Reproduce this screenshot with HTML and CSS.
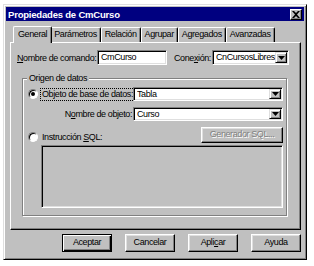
FILE: index.html
```html
<!DOCTYPE html>
<html>
<head lang="es">
    <meta charset="UTF-8">
    <title>Propiedades de CmCurso</title>
    <link rel="stylesheet" href="styles.css">
</head>
<body>
    <div class="window">
        <div class="titlebar">
            <span class="title">Propiedades de CmCurso</span>
            <span class="close">
                <svg width="8" height="7" viewBox="0 0 8 7"><path d="M0 0h2l2 2 2-2h2L5 3.5 8 7H6L4 5 2 7H0l3-3.5z" fill="#000"/></svg>
            </span>
        </div>
        <div class="tabs">
            <div class="tab active">General</div>
            <div class="tab">Parámetros</div>
            <div class="tab">Relación</div>
            <div class="tab">Agrupar</div>
            <div class="tab">Agregados</div>
            <div class="tab">Avanzadas</div>
        </div>
        <div class="panel">
            <div class="top-row">
                <span class="lbl-cmd"><u>N</u>ombre de comando:</span>
                <div class="field cmd">CmCurso</div>
                <span class="lbl-con">Cone<u>x</u>ión:</span>
                <div class="field combo con">
                    <span class="value">CnCursosLibres</span>
                    <span class="drop"><svg width="7" height="4" viewBox="0 0 7 4"><path d="M0 0h7L3.5 4z" fill="#000"/></svg></span>
                </div>
            </div>
            <div class="group">
                <span class="legend">Origen de datos</span>
                <div class="group-grid">
                    <div class="opt">
                        <span class="radio checked"></span>
                        <span class="focus">Ob<u>j</u>eto de base de datos:</span>
                    </div>
                    <div class="field combo">
                        <span class="value">Tabla</span>
                        <span class="drop"><svg width="7" height="4" viewBox="0 0 7 4"><path d="M0 0h7L3.5 4z" fill="#000"/></svg></span>
                    </div>
                    <div class="lbl-obj">N<u>o</u>mbre de objeto:</div>
                    <div class="field combo">
                        <span class="value">Curso</span>
                        <span class="drop"><svg width="7" height="4" viewBox="0 0 7 4"><path d="M0 0h7L3.5 4z" fill="#000"/></svg></span>
                    </div>
                    <div class="opt opt-sql">
                        <span class="radio"></span>
                        <span class="plain">Instrucción <u>S</u>QL:</span>
                    </div>
                    <div class="btn small disabled">Generador SQL...</div>
                    <div class="sql-box"></div>
                </div>
            </div>
        </div>
        <div class="buttons">
            <div class="btn default">Aceptar</div>
            <div class="btn">Cancelar</div>
            <div class="btn">Apli<u>c</u>ar</div>
            <div class="btn">Ayuda</div>
        </div>
    </div>
</body>
</html>
```
FILE: styles.css
```css
*{
    margin: 0;
    padding: 0;
    box-sizing: border-box;
}
body{
    background: #fff;
    font-family: "Liberation Sans", Arial, sans-serif;
    font-size: 9px;
    letter-spacing: -0.4px;
    color: #000;
    white-space: nowrap;
}
.window{
    width: 304px;
    height: 256px;
    margin: 4px 0 0 3px;
    padding: 2px;
    background: #c0c0c0;
    border: 1px solid;
    border-color: #dfdfdf #000 #000 #dfdfdf;
    box-shadow: inset 1px 1px #fff, inset -1px -1px #808080;
    display: flex;
    flex-direction: column;
}
.titlebar{
    height: 14px;
    background: #000080;
    display: flex;
    align-items: center;
    justify-content: space-between;
    padding: 0 2px 0 2px;
}
.title{
    color: #fff;
    font-weight: bold;
    font-size: 9.5px;
    letter-spacing: -0.2px;
}
.close{
    width: 12px;
    height: 11px;
    background: #c0c0c0;
    border: 1px solid;
    border-color: #fff #000 #000 #fff;
    box-shadow: inset -1px -1px #808080;
    display: flex;
    align-items: center;
    justify-content: center;
}
.tabs{
    display: flex;
    align-items: flex-end;
    height: 17px;
    margin-top: 5px;
    margin-bottom: -1px;
    padding-left: 7px;
    position: relative;
    z-index: 1;
}
.tab{
    height: 15px;
    margin-bottom: 1px;
    padding: 0 3px;
    line-height: 13px;
    background: #c0c0c0;
    border: 1px solid;
    border-bottom: none;
    border-color: #fff #000 #000 #fff;
    border-radius: 2px 2px 0 0;
    box-shadow: inset -1px 0 #808080;
}
.tab.active{
    height: 17px;
    margin-bottom: 0;
    margin-right: -2px;
    padding: 0 4px;
    line-height: 14px;
    position: relative;
    z-index: 1;
}
.panel{
    height: 188px;
    margin: 0 3px 0 4px;
    padding: 7px 0 0 6px;
    border: 1px solid;
    border-color: #fff #000 #000 #fff;
    box-shadow: inset -1px -1px #808080;
}
.top-row{
    display: flex;
    align-items: center;
    height: 15px;
}
.lbl-cmd{
    width: 80px;
    flex-shrink: 0;
}
.lbl-con{
    width: 38px;
    margin-left: 7px;
    flex-shrink: 0;
}
.field{
    height: 15px;
    background: #fff;
    border: 1px solid;
    border-color: #808080 #fff #fff #808080;
    box-shadow: inset 1px 1px #000, inset -1px -1px #dfdfdf;
    padding: 0 2px 0 3px;
    line-height: 13px;
    overflow: hidden;
    flex-shrink: 0;
}
.field.cmd{
    width: 70px;
}
.combo{
    display: flex;
    align-items: stretch;
    padding: 1px 1px 1px 3px;
    line-height: 11px;
}
.combo.con{
    width: 77px;
}
.combo .value{
    flex: 1;
    overflow: hidden;
}
.drop{
    width: 12px;
    flex-shrink: 0;
    background: #c0c0c0;
    border: 1px solid;
    border-color: #dfdfdf #000 #000 #dfdfdf;
    box-shadow: inset 1px 1px #fff, inset -1px -1px #808080;
    display: flex;
    align-items: center;
    justify-content: center;
}
.group{
    position: relative;
    width: 265px;
    height: 138px;
    margin: 13px 0 0 5px;
    border: 1px solid #808080;
    box-shadow: inset 1px 1px #fff, 1px 1px #fff;
    padding: 8px 3px 0 5px;
}
.legend{
    position: absolute;
    top: -7px;
    left: 4px;
    padding: 0 2px;
    background: #c0c0c0;
    line-height: 12px;
}
.group-grid{
    display: grid;
    grid-template-columns: 105px 150px;
    grid-template-rows: 14px 14px 16px 63px;
    row-gap: 6px;
}
.group-grid .combo{
    height: 14px;
}
.opt{
    display: flex;
    align-items: center;
}
.opt-sql{
    margin-top: 3px;
}
.radio{
    width: 10px;
    height: 10px;
    flex-shrink: 0;
    border-radius: 50%;
    background: #fff;
    border: 1px solid;
    border-color: #808080 #fff #fff #808080;
    box-shadow: inset 1px 1px #000;
    margin-right: 2px;
    display: flex;
    align-items: center;
    justify-content: center;
}
.radio.checked::after{
    content: "";
    width: 4px;
    height: 4px;
    border-radius: 50%;
    background: #000;
}
.focus{
    border: 1px dotted #000;
    padding: 0 1px;
    line-height: 11px;
}
.plain{
    padding-left: 2px;
}
.lbl-obj{
    text-align: right;
    padding-right: 1px;
    line-height: 14px;
}
.btn{
    width: 50px;
    height: 18px;
    background: #c0c0c0;
    border: 1px solid;
    border-color: #fff #000 #000 #fff;
    box-shadow: inset -1px -1px #808080, inset 1px 1px #dfdfdf;
    text-align: center;
    line-height: 15px;
}
.btn.default{
    border-color: #000;
    box-shadow: inset 1px 1px #fff, inset -1px -1px #000, inset -2px -2px #808080;
}
.btn.small{
    width: 82px;
    height: 16px;
    justify-self: end;
    line-height: 13px;
}
.btn.disabled{
    color: #808080;
    text-shadow: 1px 1px #fff;
}
.sql-box{
    grid-column: 1 / 3;
    margin: -4px 0 0 13px;
    height: 63px;
    border: 1px solid;
    border-color: #808080 #fff #fff #808080;
    box-shadow: inset 1px 1px #000, inset -1px -1px #dfdfdf;
}
.buttons{
    display: flex;
    justify-content: flex-end;
    gap: 13px;
    margin-top: 4px;
    padding-right: 3px;
}
```
